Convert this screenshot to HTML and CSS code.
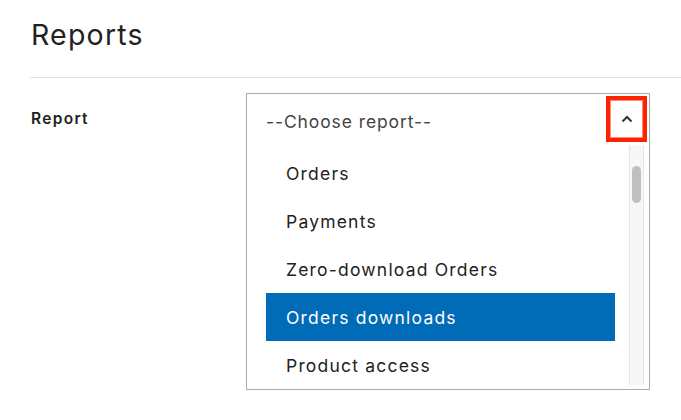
FILE: index.html
```html
<!DOCTYPE html>
<html>
<head>
<meta charset="utf-8">
<link rel="stylesheet" href="styles.css">
</head>
<body>
<div class="page">
  <h1 class="title">Reports</h1>
  <div class="rule"></div>
  <div class="form-row">
    <div class="label">Report</div>
    <div class="select">
      <div class="select-head">
        <span class="placeholder">--Choose report--</span>
        <span class="arrow">
          <svg width="12" height="8" viewBox="0 0 12 8"><path d="M1.5 6.5 L6 2 L10.5 6.5" fill="none" stroke="#333" stroke-width="2"/></svg>
        </span>
        <span class="highlight-box"></span>
      </div>
      <div class="select-body">
        <ul class="options">
          <li class="option">Orders</li>
          <li class="option">Payments</li>
          <li class="option">Zero-download Orders</li>
          <li class="option selected">Orders downloads</li>
          <li class="option">Product access</li>
        </ul>
        <div class="scroll-track"><div class="scroll-thumb"></div></div>
      </div>
    </div>
  </div>
</div>
</body>
</html>
```
FILE: styles.css
```css
* { box-sizing: border-box; }
html, body { margin: 0; padding: 0; background: #fff; }
body { font-family: Inter, "Noto Sans", sans-serif; color: #222; }
.page { padding: 0 0 0 30px; }
.title {
  margin: 0;
  padding-top: 18px;
  height: 77px;
  font-size: 28.5px;
  letter-spacing: 1.2px;
  font-weight: 400;
  color: #222;
  line-height: 34px;
  padding-left: 1px;
}
.rule { height: 1px; background: #e2e2e2; }
.form-row { display: flex; padding-top: 15px; }
.label {
  width: 216px;
  padding-left: 1px;
  padding-top: 16px;
  font-size: 15.5px;
  letter-spacing: 1.3px;
  font-weight: 600;
  color: #222;
}
.select {
  width: 404px;
  height: 297px;
  border: 1px solid #ababab;
  display: flex;
  flex-direction: column;
  overflow: hidden;
}
.select-head {
  position: relative;
  height: 51px;
  flex: none;
  display: flex;
  align-items: center;
  padding-left: 19px;
  padding-top: 3px;
}
.placeholder { font-size: 17.5px; letter-spacing: 0.9px; color: #444; flex: 1; }
.arrow { width: 41px; display: flex; justify-content: center; margin-right: 2px; margin-top: -4px; }
.arrow svg { display: block; }
.highlight-box {
  position: absolute;
  top: 2px;
  right: 2px;
  width: 41px;
  height: 46px;
  border: 4px solid #ff2200;
  box-shadow: inset 0 0 0 1px #ff8a7a;
}
.select-body { flex: 1; display: flex; min-height: 0; }
.options {
  list-style: none;
  margin: 0;
  padding: 4px 0 0 19px;
  width: 368px;
  flex: none;
}
.option {
  height: 48px;
  display: flex;
  align-items: center;
  padding-left: 20px;
  font-size: 17.5px;
  letter-spacing: 1.2px;
  color: #222;
}
.option.selected { background: #006bb7; color: #fff; }
.scroll-track {
  margin-left: 14px;
  width: 15px;
  margin-bottom: 4px;
  background: #f7f7f7;
  border-left: 1px solid #e6e6e6;
  border-right: 1px solid #e6e6e6;
  padding-top: 21px;
  display: flex;
  justify-content: center;
}
.scroll-thumb {
  width: 9px;
  height: 37px;
  background: #c0c0c0;
  border-radius: 5px;
}
```
